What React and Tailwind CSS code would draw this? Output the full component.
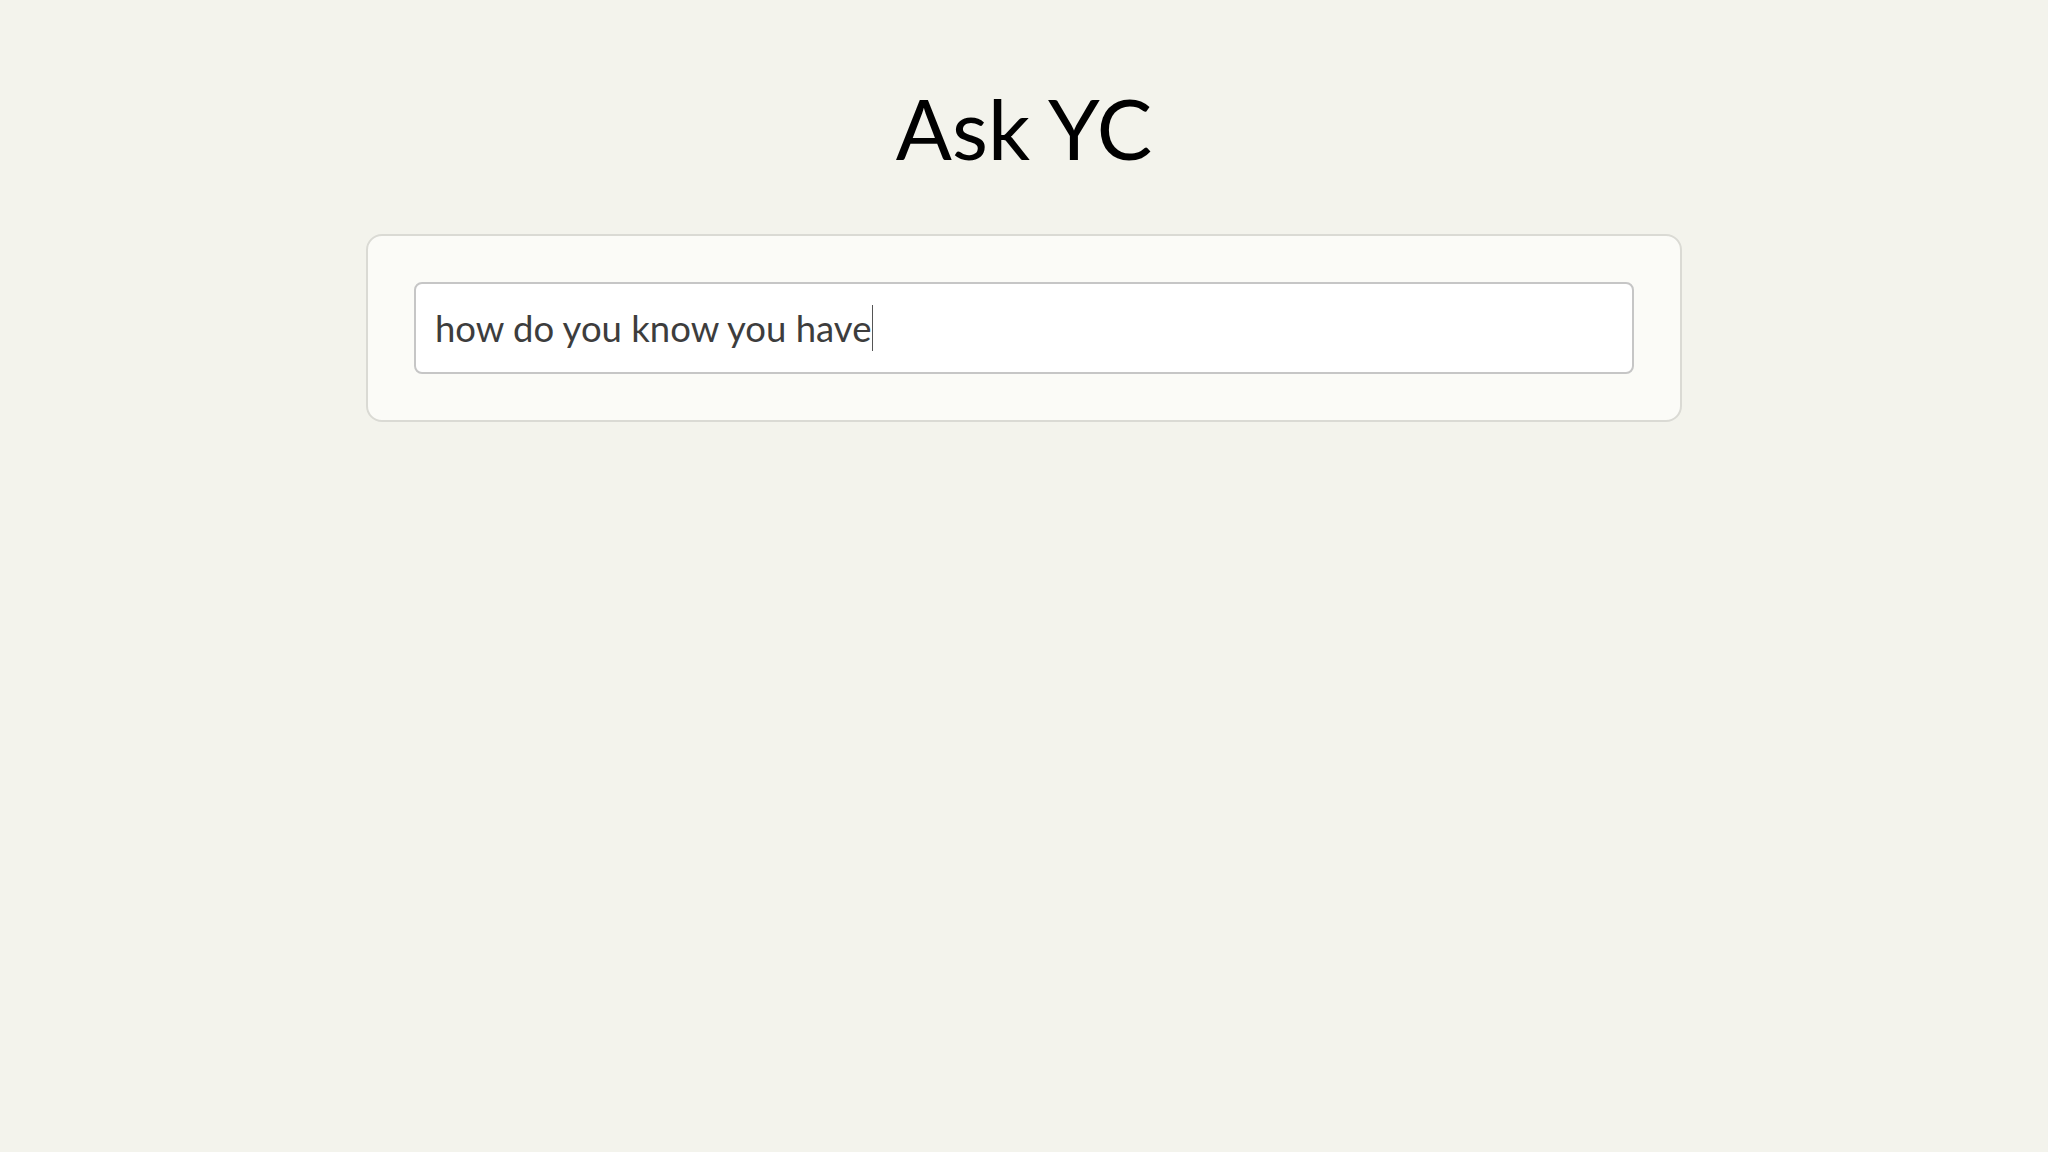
import React from "react";

const App = () => {
	return (
		<div className="min-h-screen w-full bg-[#f3f3ec] font-['Lato','Noto_Sans',sans-serif]">
			<div className="flex flex-col items-center pt-[73px]">
				<h1 className="text-[83px] leading-[110px] font-normal text-black">
					Ask YC
				</h1>
				<div className="mt-[51px] w-[1316px] rounded-2xl border-2 border-[#dadad4] bg-[#fbfbf7] p-[46px]">
					{/* Search field */}
					<div className="flex h-[92px] items-center rounded-lg border-2 border-[#c6c6c6] bg-white px-[19px]">
						<span className="text-[36.5px] leading-none text-[#3d3d3d]">
							how do you know you have
						</span>
						<span className="ml-[1px] h-[46px] w-px bg-[#555]" />
					</div>
				</div>
			</div>
		</div>
	);
};

export default App;
